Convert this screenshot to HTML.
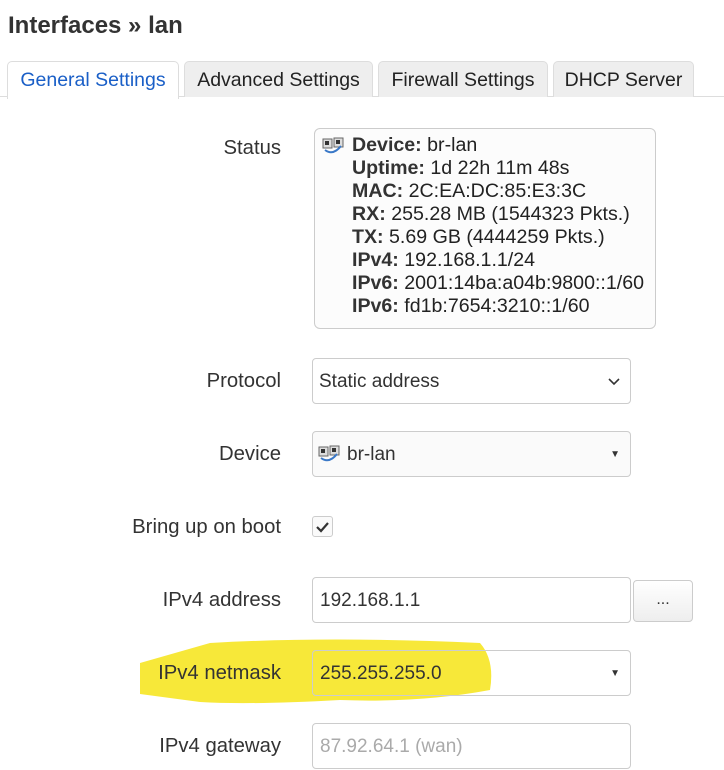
<!DOCTYPE html><html><head><style>
body{margin:0;width:724px;height:750px;overflow:hidden;background:#fff;font-family:"Liberation Sans",sans-serif;color:#333;position:relative}
.a{position:absolute}
h1{position:absolute;left:8px;top:12px;margin:0;font-size:24px;font-weight:bold;color:#333}
.tab{position:absolute;top:61px;height:35px;border:1px solid #ddd;border-bottom:none;border-radius:5px 5px 0 0;background:#eee;font-size:19.5px;line-height:36px;text-align:center;color:#222;white-space:nowrap}
.lbl{position:absolute;right:443px;font-size:20.3px;color:#333;text-align:right;white-space:nowrap}
.inp{position:absolute;left:312px;border:1px solid #ccc;border-radius:4px;background:#fff;font-size:19px;line-height:46px;box-sizing:border-box;padding-left:7px;width:319px;height:46px}
.st{line-height:23px;font-size:19.6px;color:#222;white-space:nowrap}
.st b{color:#333}
</style></head><body>
<h1>Interfaces » lan</h1>
<div class="a" style="left:0;top:96px;width:724px;height:1px;background:#ddd"></div>
<div class="tab" style="left:7px;width:170px;background:#fff;height:37px;color:#1a5fc7">General Settings</div>
<div class="tab" style="left:184px;width:187px">Advanced Settings</div>
<div class="tab" style="left:378px;width:168px">Firewall Settings</div>
<div class="tab" style="left:553px;width:139px">DHCP Server</div>

<div class="lbl" style="top:137px">Status</div>
<div class="a" style="left:314px;top:128px;width:342px;height:201px;border:1px solid #ccc;border-radius:6px;box-sizing:border-box;background:#fcfcfc"></div>
<svg class="a" style="left:322px;top:137px" width="24" height="18" viewBox="0 0 24 18"><rect x="1" y="2" width="9" height="9" fill="#ddd" stroke="#666"/><rect x="12" y="1" width="9" height="9" fill="#ddd" stroke="#666"/><rect x="3" y="4" width="4" height="4" fill="#333"/><rect x="14" y="3" width="4" height="4" fill="#333"/><path d="M3 13q8 6 16-4" stroke="#3a78c7" stroke-width="2" fill="none"/></svg>
<div class="a st" style="left:352px;top:134px">
<b>Device:</b> br-lan<br><b>Uptime:</b> 1d 22h 11m 48s<br><b>MAC:</b> 2C:EA:DC:85:E3:3C<br><b>RX:</b> 255.28 MB (1544323 Pkts.)<br><b>TX:</b> 5.69 GB (4444259 Pkts.)<br><b>IPv4:</b> 192.168.1.1/24<br><b>IPv6:</b> 2001:14ba:a04b:9800::1/60<br><b>IPv6:</b> fd1b:7654:3210::1/60</div>

<div class="lbl" style="top:370px">Protocol</div>
<div class="inp" style="top:358px;padding-left:6px">Static address<svg class="a" style="right:10px;top:19px" width="12" height="8"><path d="M1 1l5 5 5-5" stroke="#333" stroke-width="1.6" fill="none"/></svg></div>

<div class="lbl" style="top:443px">Device</div>
<div class="inp" style="top:431px;padding-left:34px;background:#fafafa">br-lan<svg class="a" style="left:5px;top:13px" width="24" height="18" viewBox="0 0 24 18"><rect x="1" y="2" width="9" height="9" fill="#ddd" stroke="#666"/><rect x="12" y="1" width="9" height="9" fill="#ddd" stroke="#666"/><rect x="3" y="4" width="4" height="4" fill="#333"/><rect x="14" y="3" width="4" height="4" fill="#333"/><path d="M3 13q8 6 16-4" stroke="#3a78c7" stroke-width="2" fill="none"/></svg><span class="a" style="right:10px;top:0;font-size:10px">▼</span></div>

<div class="lbl" style="top:516px">Bring up on boot</div>
<div class="a" style="left:312px;top:516px;width:21px;height:21px;border:1px solid #ccc;border-radius:3px;box-sizing:border-box;background:#fafafa"></div>
<svg class="a" style="left:312px;top:516px" width="21" height="21"><path d="M5 11l4 4 7-8" stroke="#333" stroke-width="2.2" fill="none"/></svg>

<div class="lbl" style="top:589px">IPv4 address</div>
<div class="inp" style="top:577px">192.168.1.1</div>
<div class="a" style="left:633px;top:580px;width:60px;height:42px;border:1px solid #ccc;border-radius:4px;box-sizing:border-box;background:linear-gradient(#fff,#eee);text-align:center;line-height:38px;font-size:16px">...</div>

<svg class="a" style="left:0;top:0" width="724" height="750"><path d="M140 663L210 643Q330 636 480 643Q495 660 490 690Q420 703 340 700Q250 705 200 702L140 694Z" fill="#f6e624" opacity="0.9"/></svg>
<div class="lbl" style="top:662px">IPv4 netmask</div>
<div class="inp" style="top:650px;background:transparent">255.255.255.0<span class="a" style="right:10px;top:0;font-size:10px">▼</span></div>

<div class="lbl" style="top:735px">IPv4 gateway</div>
<div class="inp" style="top:723px;color:#aaa">87.92.64.1 (wan)</div>
</body></html>
